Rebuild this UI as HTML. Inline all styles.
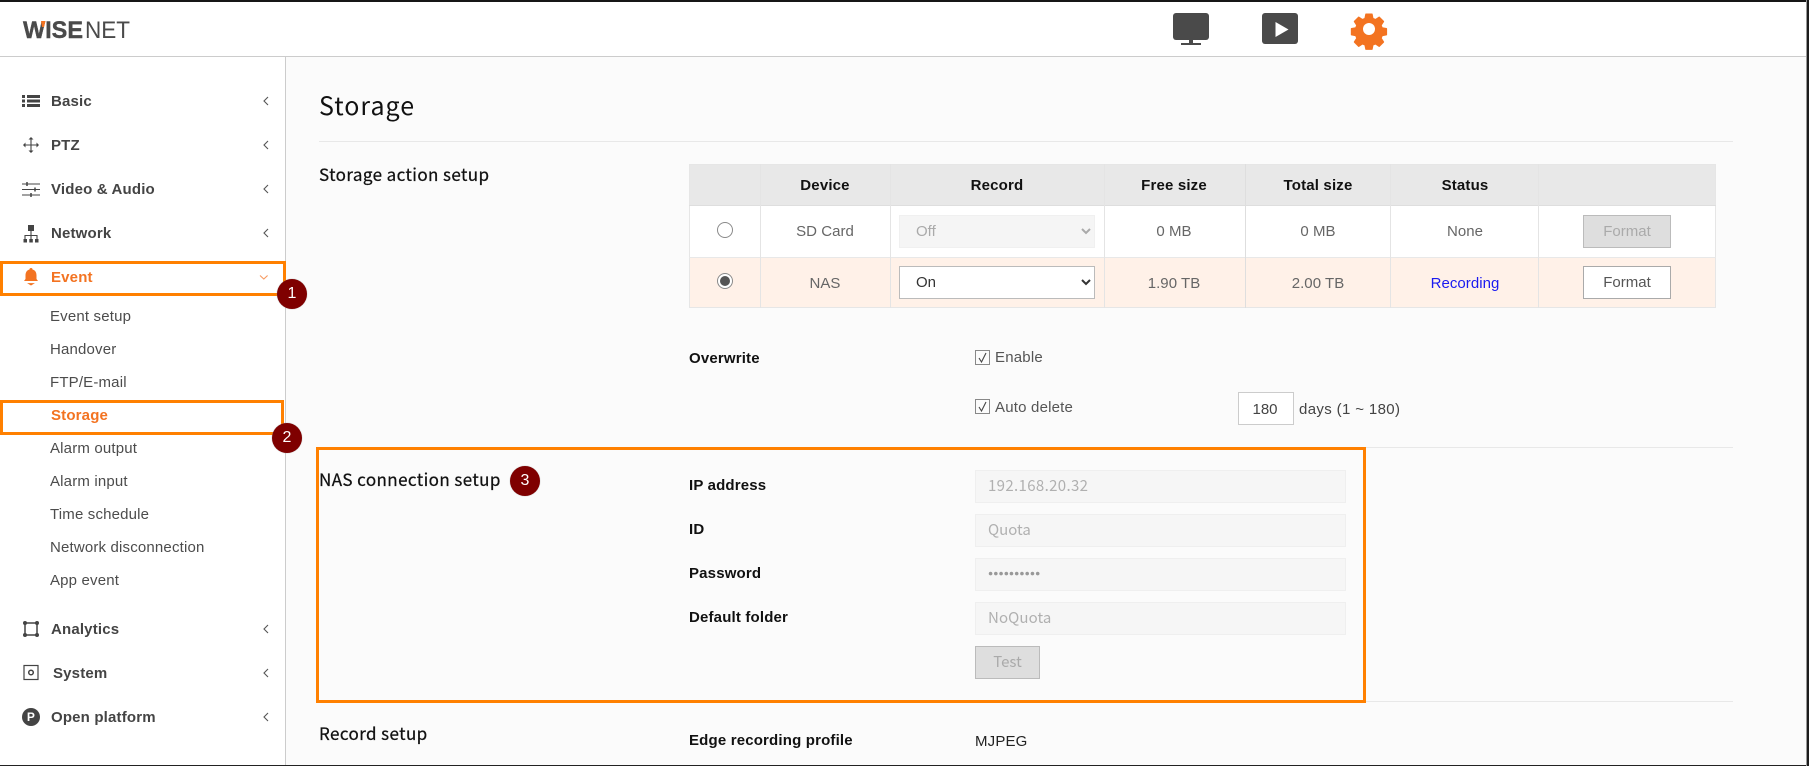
<!DOCTYPE html>
<html><head><meta charset="utf-8"><style>
html,body{margin:0;padding:0;width:1809px;height:766px;overflow:hidden;background:#fbfbfb;font-family:"Liberation Sans",sans-serif;font-size:15px}
.a{position:absolute}
.t{position:absolute;line-height:20px;white-space:nowrap;margin-top:1px;letter-spacing:.17px}
.m{font-weight:bold;color:#444;left:51px}
.s{color:#4c4c4c;left:50px}
.h{font-family:"Noto Sans CJK KR","Noto Sans CJK JP",sans-serif;color:#111;left:319px;font-size:17px;letter-spacing:.4px;margin-top:0;-webkit-text-stroke:.25px #111}
.l{font-weight:bold;color:#111;left:689px}
.c{transform:translateX(-50%)}
.th{font-weight:bold;color:#111;top:175px}
.v{color:#666;letter-spacing:.05px}
.inp{position:absolute;left:975px;width:371px;height:33px;box-sizing:border-box;background:#f6f6f6;border:1px solid #efefef;color:#b0b0b0;font-family:"Noto Sans CJK KR","Noto Sans CJK JP",sans-serif;font-size:15px;line-height:29px;padding-left:12px}
.btn{position:absolute;box-sizing:border-box;height:33px;text-align:center;line-height:31px;font-size:15px;border:1px solid #aaa}
.badge{position:absolute;width:30px;height:30px;border-radius:50%;background:#7f0000;color:#fff;text-align:center;line-height:30px;font-size:16px;box-shadow:0 0 1px #999}
.box{position:absolute;box-sizing:border-box;border:3px solid #ff8000}
.ln{position:absolute;background:#e8e8e8}
select{position:absolute;left:899px;width:196px;height:33px;box-sizing:border-box;font:15px "Liberation Sans",sans-serif;padding-left:12px;margin:0;border-radius:0}
svg{position:absolute;overflow:visible}
</style></head><body>

<!-- frame -->
<div class="a" style="left:0;top:0;width:1809px;height:2px;background:#161616"></div>
<div class="a" style="left:0;top:2px;width:1806px;height:54px;background:#fff"></div>
<div class="a" style="left:0;top:56px;width:1806px;height:1px;background:#ccc"></div>
<div class="a" style="left:0;top:57px;width:285px;height:708px;background:#fff"></div>
<div class="a" style="left:285px;top:57px;width:1px;height:708px;background:#ccc"></div>
<div class="a" style="left:0;top:765px;width:1809px;height:1px;background:#222"></div>
<div class="a" style="left:1806px;top:0;width:1px;height:766px;background:#999"></div>
<div class="a" style="left:1807px;top:0;width:2px;height:766px;background:#1c1c1c"></div>

<!-- logo -->
<svg style="left:0;top:0" width="200" height="56">
<text x="23" y="38" font-family="Liberation Sans" font-weight="bold" font-size="24" fill="#4a4a4a" stroke="#4a4a4a" stroke-width=".4" textLength="60" lengthAdjust="spacingAndGlyphs">WISE</text>
<text x="85" y="38" font-family="Liberation Sans" font-size="24" fill="#4a4a4a" textLength="45" lengthAdjust="spacingAndGlyphs">NET</text>
<path d="M41 21h4.500l-1.500 6h-2z" fill="#f37321"/>
</svg>

<!-- top icons -->
<svg style="left:1173px;top:13px" width="36" height="34"><rect width="36" height="27" rx="3" fill="#4a4a4a"/><rect x="16" y="26" width="4" height="5" fill="#4a4a4a"/><rect x="8" y="30" width="20" height="2" fill="#4a4a4a"/></svg>
<svg style="left:1262px;top:13px" width="36" height="31"><rect width="36" height="31" rx="3" fill="#4a4a4a"/><path d="M13.500 9v15l13-7.500z" fill="#fff"/></svg>
<svg style="left:1351px;top:11px" width="36" height="36" viewBox="0 0 36 36"><path d="M14.500 1h7l1 5 3 1.300 4.300-2.800 4.900 4.900-2.800 4.300 1.200 3 5 1v7l-5 1-1.200 3 2.800 4.300-4.900 4.900-4.300-2.800-3 1.200-1 5h-7l-1-5-3-1.200-4.300 2.800-4.900-4.900 2.800-4.300-1.200-3-5-1v-7l5-1 1.200-3-2.800-4.300 4.900-4.900 4.300 2.800 3-1.300z" transform="translate(2.300 2.300) scale(.87)" fill="#f37321" stroke="#f37321" stroke-width="1.500" stroke-linejoin="round"/><circle cx="18" cy="18" r="6" fill="#fff"/></svg>

<!-- sidebar -->
<div class="t m" style="top:91px">Basic</div>
<div class="t m" style="top:135px">PTZ</div>
<div class="t m" style="top:179px">Video &amp; Audio</div>
<div class="t m" style="top:223px">Network</div>
<div class="t m" style="top:267px;color:#f37321">Event</div>
<div class="t s" style="top:306px">Event setup</div>
<div class="t s" style="top:339px">Handover</div>
<div class="t s" style="top:372px">FTP/E-mail</div>
<div class="t" style="top:405px;left:51px;font-weight:bold;color:#f37321">Storage</div>
<div class="t s" style="top:438px">Alarm output</div>
<div class="t s" style="top:471px">Alarm input</div>
<div class="t s" style="top:504px">Time schedule</div>
<div class="t s" style="top:537px">Network disconnection</div>
<div class="t s" style="top:570px">App event</div>
<div class="t m" style="top:619px">Analytics</div>
<div class="t m" style="top:663px;left:53px">System</div>
<div class="t m" style="top:707px">Open platform</div>

<svg style="left:0;top:0" width="285" height="766" fill="none" stroke="#555" stroke-width="1.100">
<path d="M268 97l-4 4 4 4M268 141l-4 4 4 4M268 185l-4 4 4 4M268 229l-4 4 4 4M268 625l-4 4 4 4M268 669l-4 4 4 4M268 713l-4 4 4 4"/>
<path d="M260 275.500l3.800 3.500 3.800-3.500" stroke="#f79a60"/>
<!-- basic -->
<g fill="#444" stroke="none"><rect x="22" y="95" width="3" height="3"/><rect x="22" y="99.500" width="3" height="3"/><rect x="22" y="104" width="3" height="3"/><rect x="27" y="95" width="13" height="3"/><rect x="27" y="99.500" width="13" height="3"/><rect x="27" y="104" width="13" height="3"/></g>
<!-- ptz -->
<path d="M24 145h14M31 138v14" stroke="#444"/><path d="M28.500 139.500L31 137l2.500 2.500zM28.500 150.500L31 153l2.500-2.500zM25.500 142.500L23 145l2.500 2.500zM36.500 142.500L39 145l-2.500 2.500z" fill="#444" stroke="none"/>
<!-- video -->
<path d="M22 184h18M22 189.500h18M22 195h18" stroke="#444"/><path d="M27 182v4M35 187.500v4M31 193v4" stroke="#444" stroke-width="1.500"/>
<!-- network -->
<g fill="#444" stroke="none"><rect x="28" y="225" width="6" height="6"/><rect x="23.500" y="239" width="3.500" height="3.500"/><rect x="29.300" y="239" width="3.500" height="3.500"/><rect x="35" y="239" width="3.500" height="3.500"/></g><path d="M31 231v8M25 239v-3.500h12v3.500" stroke="#444"/>
<!-- bell -->
<path d="M31 268a1.500 1.500 0 0 1 1.500 1.500c3 .8 4 3.300 4 6v3.500l1.500 2H24l1.500-2v-3.500c0-2.700 1-5.200 4-6A1.500 1.500 0 0 1 31 268z" fill="#f37321" stroke="none"/><path d="M28.500 283.500h5l-2.500 1.500z" fill="#f37321" stroke="#f37321" stroke-width=".8"/>
<!-- analytics -->
<rect x="25" y="623" width="12" height="12" stroke="#444" stroke-width="1.500"/><g fill="#444" stroke="none"><circle cx="25" cy="623" r="2"/><circle cx="37" cy="623" r="2"/><circle cx="25" cy="635" r="2"/><circle cx="37" cy="635" r="2"/></g>
<!-- system -->
<rect x="24" y="665.500" width="14" height="14" stroke="#444" stroke-width="1.200"/><circle cx="31" cy="672.500" r="2.300" stroke="#444" stroke-width="1.500"/>
<!-- open -->
<circle cx="31" cy="717" r="9" fill="#444" stroke="none"/>
</svg>
<div class="t" style="left:26px;top:706px;width:10px;text-align:center;color:#fff;font-weight:bold;font-size:12px">P</div>

<div class="box" style="left:0;top:261px;width:286px;height:35px"></div>
<div class="box" style="left:0;top:400px;width:284px;height:35px"></div>
<div class="badge" style="left:277px;top:279px">1</div>
<div class="badge" style="left:272px;top:423px">2</div>

<!-- content -->
<div class="t" style="left:319px;top:89px;font-family:'Noto Sans CJK KR','Noto Sans CJK JP',sans-serif;font-size:25px;line-height:30px;color:#111;letter-spacing:1px">Storage</div>
<div class="ln" style="left:319px;top:141px;width:1414px;height:1px"></div>
<div class="ln" style="left:319px;top:447px;width:1414px;height:1px"></div>
<div class="ln" style="left:319px;top:701px;width:1414px;height:1px"></div>

<div class="t h" style="top:164px">Storage action setup</div>

<!-- table -->
<div class="a" style="left:689px;top:164px;width:1027px;height:144px;background:#fff"></div>
<div class="a" style="left:689px;top:164px;width:1027px;height:42px;background:#e8e8e8"></div>
<div class="a" style="left:689px;top:258px;width:1027px;height:50px;background:#fff1e8"></div>
<div class="a" style="left:689px;top:164px;width:1027px;height:144px;box-sizing:border-box;border:1px solid #e6e6e6"></div>
<div class="ln" style="left:689px;top:205px;width:1027px;height:1px;background:#dedede"></div>
<div class="ln" style="left:689px;top:257px;width:1027px;height:1px"></div>
<div class="ln" style="left:760px;top:164px;width:1px;height:144px;background:#e4e4e4"></div>
<div class="ln" style="left:890px;top:164px;width:1px;height:144px;background:#e4e4e4"></div>
<div class="ln" style="left:1104px;top:164px;width:1px;height:144px;background:#e4e4e4"></div>
<div class="ln" style="left:1245px;top:164px;width:1px;height:144px;background:#dedede"></div>
<div class="ln" style="left:1390px;top:164px;width:1px;height:144px;background:#e4e4e4"></div>
<div class="ln" style="left:1538px;top:164px;width:1px;height:144px;background:#e4e4e4"></div>

<div class="t c th" style="left:825px">Device</div>
<div class="t c th" style="left:997px">Record</div>
<div class="t c th" style="left:1174px">Free size</div>
<div class="t c th" style="left:1318px">Total size</div>
<div class="t c th" style="left:1465px">Status</div>

<svg style="left:717px;top:222px" width="16" height="68" fill="none"><circle cx="8" cy="8" r="7.500" fill="#fff" stroke="#8a8a8a"/><circle cx="8" cy="59" r="7.500" fill="#fff" stroke="#8a8a8a"/><circle cx="8" cy="59" r="5" fill="#555"/></svg>

<div class="t c v" style="left:825px;top:221px">SD Card</div>
<div class="t c v" style="left:825px;top:273px">NAS</div>
<select disabled style="top:215px;background:#f5f5f5;color:#aaa;border:1px solid #f0f0f0;opacity:1"><option>Off</option></select>
<select style="top:266px;background:#fff;color:#333;border:1px solid #bbb"><option>On</option></select>
<div class="t c v" style="left:1174px;top:221px">0 MB</div>
<div class="t c v" style="left:1174px;top:273px">1.90 TB</div>
<div class="t c v" style="left:1318px;top:221px">0 MB</div>
<div class="t c v" style="left:1318px;top:273px">2.00 TB</div>
<div class="t c v" style="left:1465px;top:221px">None</div>
<div class="t c" style="left:1465px;top:273px;color:#1a1af0;letter-spacing:.05px">Recording</div>
<div class="btn" style="left:1583px;top:215px;width:88px;background:#dedede;color:#aaa;border-color:#bbb">Format</div>
<div class="btn" style="left:1583px;top:266px;width:88px;background:#fff;color:#555">Format</div>

<!-- overwrite -->
<div class="t l" style="top:348px">Overwrite</div>
<svg style="left:975px;top:350px" width="16" height="64" fill="none"><rect x=".5" y=".5" width="14" height="14" stroke="#888" fill="#fbfbfb"/><path d="M4 8l2.500 4L11 3" stroke="#444" stroke-width="1.100"/><rect x=".5" y="49.500" width="14" height="14" stroke="#888" fill="#fbfbfb"/><path d="M4 57l2.500 4L11 52" stroke="#444" stroke-width="1.100"/></svg>
<div class="t" style="left:995px;top:347px;color:#555;letter-spacing:.2px">Enable</div>
<div class="t" style="left:995px;top:397px;color:#555;letter-spacing:.2px">Auto delete</div>
<div class="a" style="left:1238px;top:392px;width:56px;height:33px;box-sizing:border-box;background:#fff;border:1px solid #ccc;text-align:center;line-height:31px;color:#444;padding-right:2px;padding-top:1px">180</div>
<div class="t" style="left:1299px;top:399px;color:#444;letter-spacing:.36px">days (1 ~ 180)</div>

<!-- NAS -->
<div class="box" style="left:316px;top:447px;width:1050px;height:256px"></div>
<div class="t h" style="top:469px">NAS connection setup</div>
<div class="badge" style="left:510px;top:466px">3</div>
<div class="t l" style="top:475px">IP address</div>
<div class="t l" style="top:519px">ID</div>
<div class="t l" style="top:563px">Password</div>
<div class="t l" style="top:607px">Default folder</div>
<div class="inp" style="top:470px;letter-spacing:.35px">192.168.20.32</div>
<div class="inp" style="top:514px">Quota</div>
<div class="inp" style="top:558px;font-family:'Liberation Sans',sans-serif;font-size:8.5px;letter-spacing:.1px;color:#999">●●●●●●●●●●</div>
<div class="inp" style="top:602px;letter-spacing:.1px">NoQuota</div>
<div class="btn" style="left:975px;top:646px;width:65px;background:#dedede;color:#aaa;border-color:#bbb;font-family:'Noto Sans CJK KR','Noto Sans CJK JP',sans-serif;line-height:29px">Test</div>

<!-- record -->
<div class="t h" style="top:723px">Record setup</div>
<div class="t l" style="top:730px">Edge recording profile</div>
<div class="t" style="left:975px;top:731px;color:#222">MJPEG</div>

</body></html>
